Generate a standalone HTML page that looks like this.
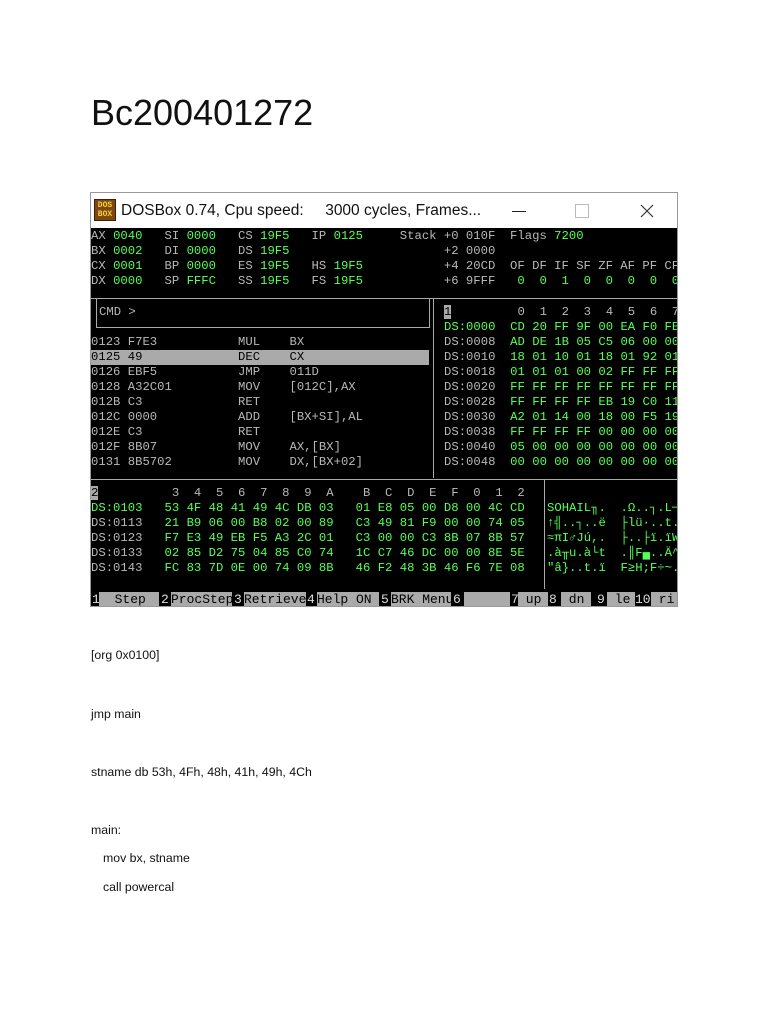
<!DOCTYPE html>
<html><head><meta charset="utf-8"><style>
body{margin:0;width:768px;height:1024px;background:#fff;position:relative;overflow:hidden;font-family:"Liberation Sans",sans-serif}
.a{position:absolute;white-space:pre}
.t{font-size:12.3px;color:#111;left:91px}
#dos{position:absolute;left:90px;top:192px;width:588px;height:415px;background:#000;overflow:hidden;border:1px solid #999;box-sizing:border-box}
.m{position:absolute;white-space:pre;font-family:"Liberation Mono",monospace;font-size:12.25px;line-height:15px;color:#b8b8b8}
.g{color:#55ff55}
.hl{position:absolute;background:#aaa}
.ln{position:absolute;background:#aaa}
.fk{position:absolute;top:399px;height:15px;background:#aaa;color:#000;overflow:hidden;font-size:13px}
.fn{position:absolute;top:399px;height:15px;color:#ddd;font-size:13px}
</style></head><body>
<div class="a" style="left:91px;top:92px;font-size:36px;color:#111">Bc200401272</div>

<div id="dos">
 <div style="position:absolute;left:0;top:0;width:588px;height:35px;background:#fff"></div>
 <div style="position:absolute;left:3px;top:6px;width:22px;height:22px;background:#7a4a12;border:1px solid #3a2008;box-sizing:border-box;font:bold 8px 'Liberation Mono',monospace;color:#ffcc33;line-height:9px;text-align:center;padding-top:1px">DOS<br>BOX</div>
 <div class="a" style="left:30px;top:9px;font-size:15.5px;color:#111">DOSBox 0.74, Cpu speed:&nbsp;&nbsp;&nbsp;&nbsp; 3000 cycles, Frames...</div>
 <div style="position:absolute;left:421px;top:18px;width:14px;height:1px;background:#222"></div>
 <div style="position:absolute;left:484px;top:11px;width:12px;height:12px;border:1px solid #bbb"></div>
 <svg style="position:absolute;left:549px;top:11px" width="14" height="14"><path d="M1 1L13 13M13 1L1 13" stroke="#333" stroke-width="1.2"/></svg>

 <div class="m" style="left:0px;top:36px">AX <span class="g">0040</span>   SI <span class="g">0000</span>   CS <span class="g">19F5</span>   IP <span class="g">0125</span>     Stack +0 010F  Flags <span class="g">7200</span>
BX <span class="g">0002</span>   DI <span class="g">0000</span>   DS <span class="g">19F5</span>                     +2 0000
CX <span class="g">0001</span>   BP <span class="g">0000</span>   ES <span class="g">19F5</span>   HS <span class="g">19F5</span>           +4 20CD  OF DF IF SF ZF AF PF CF
DX <span class="g">0000</span>   SP <span class="g">FFFC</span>   SS <span class="g">19F5</span>   FS <span class="g">19F5</span>           +6 9FFF   <span class="g">0  0  1  0  0  0  0  0</span></div>

 <div class="ln" style="left:0;top:105px;width:588px;height:1px"></div>
 <div class="ln" style="left:342px;top:105px;width:1px;height:180px"></div>
 <div style="position:absolute;left:5px;top:106px;width:334px;height:29px;border:1px solid #aaa;border-top:none;box-sizing:border-box"></div>
 <div class="m" style="left:8px;top:112px">CMD &gt;</div>
 <div class="hl" style="left:0;top:157px;width:338px;height:15px"></div>
 <div class="m" style="left:0px;top:142px">0123 F7E3           MUL    BX
<span style="color:#000">0125 49             DEC    CX</span>
0126 EBF5           JMP    011D
0128 A32C01         MOV    [012C],AX
012B C3             RET
012C 0000           ADD    [BX+SI],AL
012E C3             RET
012F 8B07           MOV    AX,[BX]
0131 8B5702         MOV    DX,[BX+02]</div>
 <div class="m" style="left:353px;top:112px"><span style="background:#aaa;color:#000">1</span>         0  1  2  3  4  5  6  7
<span class="g">DS:0000</span>  <span class="g">CD 20 FF 9F 00 EA F0 FE</span>
DS:0008  <span class="g">AD DE 1B 05 C5 06 00 00</span>
DS:0010  <span class="g">18 01 10 01 18 01 92 01</span>
DS:0018  <span class="g">01 01 01 00 02 FF FF FF</span>
DS:0020  <span class="g">FF FF FF FF FF FF FF FF</span>
DS:0028  <span class="g">FF FF FF FF EB 19 C0 11</span>
DS:0030  <span class="g">A2 01 14 00 18 00 F5 19</span>
DS:0038  <span class="g">FF FF FF FF 00 00 00 00</span>
DS:0040  <span class="g">05 00 00 00 00 00 00 00</span>
DS:0048  <span class="g">00 00 00 00 00 00 00 00</span></div>

 <div class="ln" style="left:0;top:286px;width:588px;height:1px"></div>
 <div class="ln" style="left:453px;top:286px;width:1px;height:110px"></div>
 <div class="m" style="left:0px;top:293px"><span style="background:#aaa;color:#000">2</span>          3  4  5  6  7  8  9  A    B  C  D  E  F  0  1  2
<span class="g">DS:0103</span>   <span class="g">53 4F 48 41 49 4C DB 03   01 E8 05 00 D8 00 4C CD</span>
DS:0113   <span class="g">21 B9 06 00 B8 02 00 89   C3 49 81 F9 00 00 74 05</span>
DS:0123   <span class="g">F7 E3 49 EB F5 A3 2C 01   C3 00 00 C3 8B 07 8B 57</span>
DS:0133   <span class="g">02 85 D2 75 04 85 C0 74   1C C7 46 DC 00 00 8E 5E</span>
DS:0143   <span class="g">FC 83 7D 0E 00 74 09 8B   46 F2 48 3B 46 F6 7E 08</span></div>
 <div class="m g" style="left:456px;top:308px">SOHAIL╖.  .Ω..┐.L─
↑╣..┐..ë  ├lü·..t.
≈πI♂Jú,.  ├..├ï.ïW
.à╥u.à└t  .║F▄..Ä^
"â}..t.ï  F≥H;F÷~.</div>

 <div class="ln" style="left:0;top:396px;width:588px;height:3px;background:#000"></div>
 <div class="fn m" style="left:1px">1</div><div class="fk m" style="left:8px;width:60px">  Step</div>
 <div class="fn m" style="left:70px">2</div><div class="fk m" style="left:80px;width:61px">ProcStep</div>
 <div class="fn m" style="left:143px">3</div><div class="fk m" style="left:153px;width:62px">Retrieve</div>
 <div class="fn m" style="left:216px">4</div><div class="fk m" style="left:226px;width:62px">Help ON</div>
 <div class="fn m" style="left:290px">5</div><div class="fk m" style="left:300px;width:60px">BRK Menu</div>
 <div class="fn m" style="left:362px">6</div><div class="fk m" style="left:373px;width:46px"></div>
 <div class="fn m" style="left:420px">7</div><div class="fk m" style="left:427px;width:30px"> up</div>
 <div class="fn m" style="left:458px">8</div><div class="fk m" style="left:470px;width:30px"> dn</div>
 <div class="fn m" style="left:506px">9</div><div class="fk m" style="left:516px;width:28px"> le</div>
 <div class="fn m" style="left:544px">10</div><div class="fk m" style="left:560px;width:30px"> ri</div>
</div>

<div class="a t" style="top:648px">[org 0x0100]</div>
<div class="a t" style="top:707px">jmp main</div>
<div class="a t" style="top:765px">stname db 53h, 4Fh, 48h, 41h, 49h, 4Ch</div>
<div class="a t" style="top:823px">main:</div>
<div class="a t" style="top:851px;left:103px">mov bx, stname</div>
<div class="a t" style="top:880px;left:103px">call powercal</div>
</body></html>
